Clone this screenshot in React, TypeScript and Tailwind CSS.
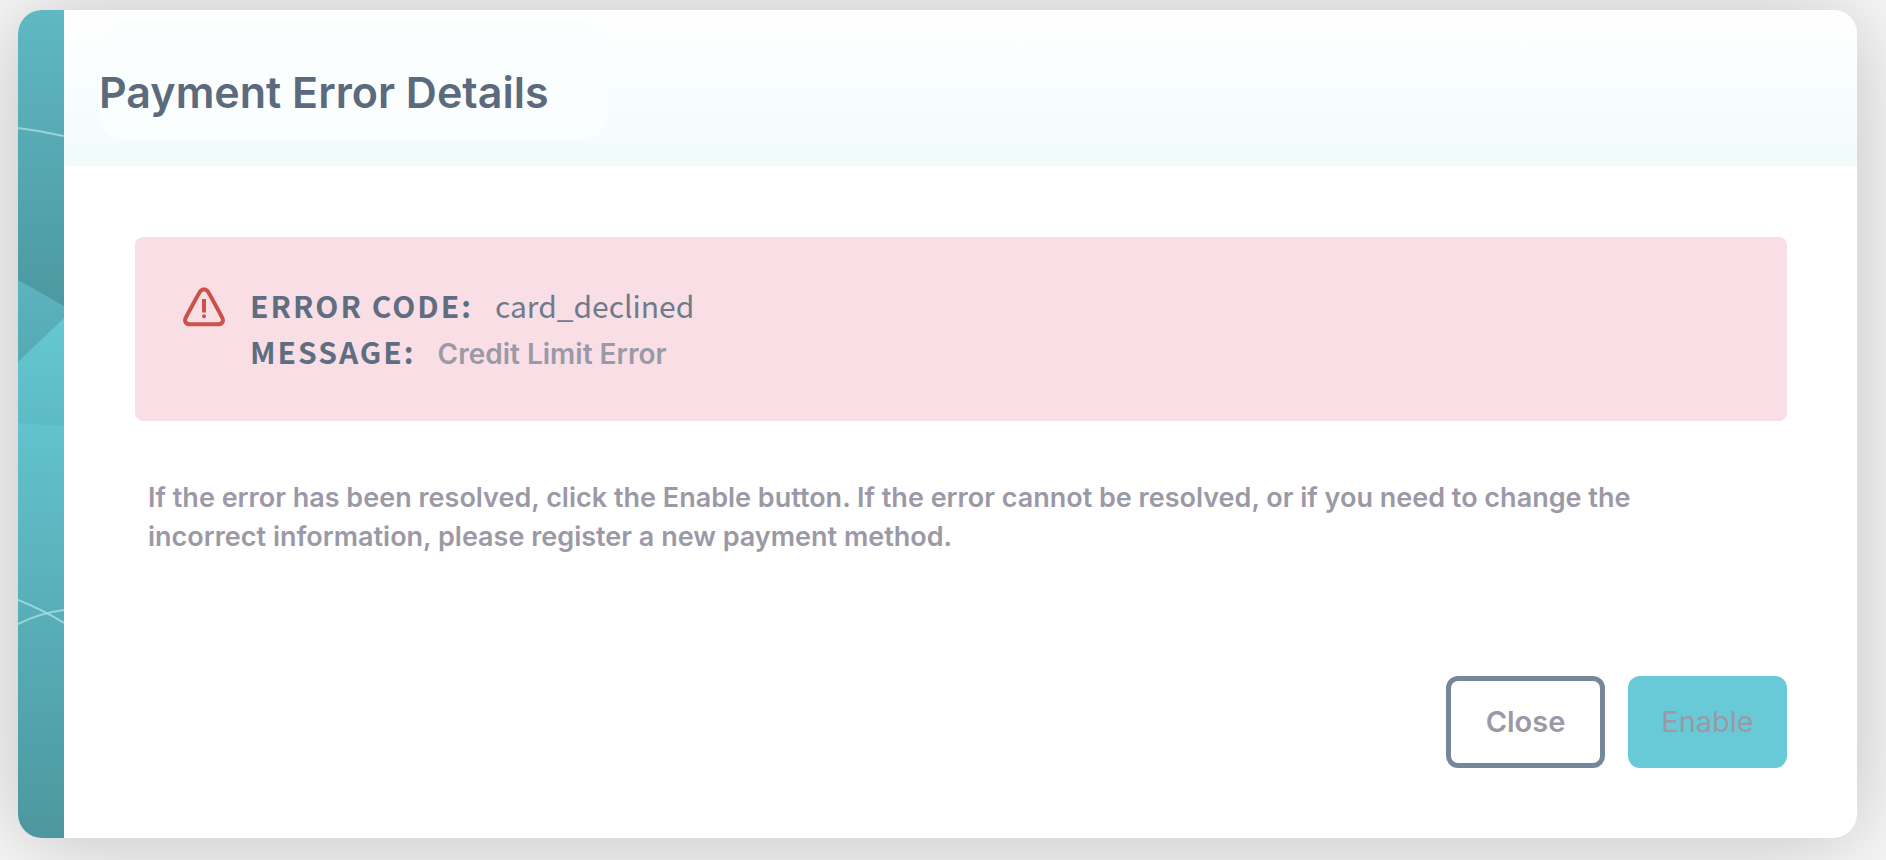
import type { ButtonHTMLAttributes } from "react";
import { cva, type VariantProps } from "class-variance-authority";

const errorDetails = [
  {
    label: "ERROR CODE:",
    value: "card_declined",
    valueClass: "text-[30px] text-[#6e7b8c] font-['Noto_Sans_CJK_JP',sans-serif]"
  },
  {
    label: "MESSAGE:",
    value: "Credit Limit Error",
    valueClass: "text-[28px] font-semibold text-[#9c99a7]"
  }
];

const buttonStyles = cva("h-[92px] w-[159px] cursor-pointer rounded-xl text-[29px] text-[#9c99a7]", {
  variants: {
    variant: {
      outline: "border-[5px] border-[#76879b] bg-white font-semibold",
      solid: "bg-[#67cad6] font-normal"
    }
  }
});

type ButtonProps = ButtonHTMLAttributes<HTMLButtonElement> & VariantProps<typeof buttonStyles>;

function Button({ variant, ...props }: ButtonProps) {
  return <button type="button" className={buttonStyles({ variant })} {...props} />;
}

function WarningIcon() {
  return (
    <svg viewBox="0 0 42 40" className="h-10 w-[42px] shrink-0" fill="none" aria-hidden="true">
      <path
        d="M17.2 4.4 Q21 0 24.8 4.4 Q26 6 38.9 30 C41.5 34.5 38.8 37.3 35 37.3 H7 C3.2 37.3 0.5 34.5 3.1 30 Q16 6 17.2 4.4 Z"
        stroke="#cc5148"
        strokeWidth="4"
        strokeLinejoin="round"
      />
      <path d="M21 12 V25.5" stroke="#cc5148" strokeWidth="4" />
      <circle cx="21" cy="29.3" r="2" fill="#cc5148" />
    </svg>
  );
}

function SideArt() {
  return (
    <svg
      viewBox="0 0 46 828"
      preserveAspectRatio="none"
      className="w-[46px] shrink-0 self-stretch"
      aria-hidden="true"
    >
      <defs>
        <linearGradient id="side-top" x1="0" y1="0" x2="0" y2="1">
          <stop offset="0" stopColor="#5fb8c3" />
          <stop offset="1" stopColor="#4c979f" />
        </linearGradient>
        <linearGradient id="side-fold" x1="0" y1="0" x2="0" y2="1">
          <stop offset="0" stopColor="#5cb4be" />
          <stop offset="1" stopColor="#55a9b3" />
        </linearGradient>
        <linearGradient id="side-light" x1="0" y1="0" x2="0" y2="1">
          <stop offset="0" stopColor="#65c8d2" />
          <stop offset="1" stopColor="#5dbac5" />
        </linearGradient>
        <linearGradient id="side-bottom" x1="0" y1="0" x2="0" y2="1">
          <stop offset="0" stopColor="#62c2cd" />
          <stop offset="1" stopColor="#4d979f" />
        </linearGradient>
      </defs>
      <path d="M0 0 H46 V308 L0 285 Z" fill="url(#side-top)" />
      <path d="M0 270 L46 296 V310 L0 354 Z" fill="url(#side-fold)" />
      <path d="M0 352 L46 308 V418 L0 415 Z" fill="url(#side-light)" />
      <path d="M0 413 L46 416 V828 H0 Z" fill="url(#side-bottom)" />
      <g fill="none" stroke="#a5dbe0" strokeWidth="2" strokeOpacity="0.85">
        <path d="M0 118 Q24 121 46 126" />
        <path d="M0 590 Q25 600 46 613" />
        <path d="M0 614 Q22 603 46 600" />
      </g>
    </svg>
  );
}

export default function App() {
  return (
    <div className="flex min-h-screen bg-[#f7f7f7] pt-[10px] pr-[29px] pb-[22px] pl-[18px] font-[Inter,sans-serif]">
      <section
        role="dialog"
        aria-labelledby="dialog-title"
        className="flex flex-1 overflow-hidden rounded-3xl bg-white shadow-[0_4px_90px_rgba(0,0,0,0.22)]"
      >
        <SideArt />
        <div className="flex min-w-0 flex-1 flex-col">
          <header className="bg-linear-to-b from-white to-[#f1fbfc] px-[35px] pt-3 pb-[26px]">
            <div className="w-fit rounded-3xl bg-[#fbfeff] pt-[46px] pr-[58px] pb-6">
              <h1
                id="dialog-title"
                className="text-[43px] leading-[48px] font-semibold text-[#5c6a7e]"
              >
                Payment Error Details
              </h1>
            </div>
          </header>

          <div className="flex flex-1 flex-col pt-[71px] pr-[70px] pb-[70px] pl-[71px]">
            <div
              role="alert"
              className="flex items-start gap-[25px] rounded-lg bg-[#f9dfe5] px-12 pt-[45px] pb-[44px]"
            >
              <div className="pt-[5px]">
                <WarningIcon />
              </div>
              <dl>
                {errorDetails.map((item) => (
                  <div key={item.label} className="flex items-baseline gap-[22px] leading-[46px]">
                    <dt className="font-['Noto_Sans_CJK_JP',sans-serif] text-[30px] font-bold tracking-[2px] text-[#5f6d80]">
                      {item.label}
                    </dt>
                    <dd className={item.valueClass}>{item.value}</dd>
                  </div>
                ))}
              </dl>
            </div>

            <p className="mt-[57px] pr-[100px] pl-[13px] text-[27px] leading-[39px] font-semibold text-[#9c99a7]">
              If the error has been resolved, click the Enable button. If the error cannot be
              resolved, or if you need to change the incorrect information, please register a new
              payment method.
            </p>

            <div className="mt-auto flex justify-end gap-[23px]">
              <Button variant="outline">Close</Button>
              <Button variant="solid">Enable</Button>
            </div>
          </div>
        </div>
      </section>
    </div>
  );
}
